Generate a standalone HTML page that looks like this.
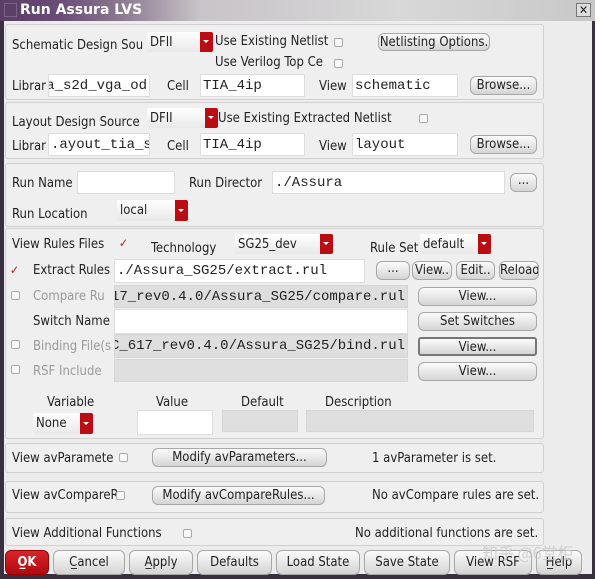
<!DOCTYPE html>
<html><head><meta charset="utf-8"><style>
*{box-sizing:border-box;margin:0;padding:0}
body{width:600px;height:579px;overflow:hidden;background:#fff;font-family:"DejaVu Sans Condensed","Liberation Sans",sans-serif;font-size:13px;color:#222;position:relative}
.a{position:absolute;white-space:nowrap}
#win{position:absolute;left:0;top:0;width:595px;height:579px;background:#3a2f40}
#inner{position:absolute;left:4px;top:21px;width:588px;height:553px;background:#ececec}
#title{position:absolute;left:0;top:0;width:595px;height:21px;background:linear-gradient(90deg,#5a3e66 0,#6a4c78 60px,#8a7890 120px,#c8c4c8 200px,#d8d8d8 400px,#c8c8c8 100%)}
.pn{position:absolute;left:5px;width:539px;border:1px solid #d0d0d0;border-radius:3px;background:#efefef}
.inp{position:absolute;background:#fff;border:1px solid #ddd;font-family:"Liberation Mono",monospace;font-size:14px;line-height:20px;padding-left:2px;overflow:hidden;white-space:nowrap}
.r{display:flex;justify-content:flex-end;padding-right:2px}
.gr{background:#dedede;border-color:#d6d6d6}
.btn{position:absolute;border:1px solid #a8a8a8;border-radius:6px;background:linear-gradient(#fbfbfb,#e4e4e4 60%,#d4d4d4);text-align:center;font-size:13px;line-height:17px;white-space:nowrap;overflow:hidden}
.cb{position:absolute;background:linear-gradient(#fff,#e8e8e8);border-radius:2px;display:flex;align-items:center;font-size:13px;line-height:19px;padding-left:3px;overflow:hidden;white-space:nowrap;justify-content:flex-start}
.cb:after{content:"";position:absolute;right:0;top:0;bottom:0;width:13px;background:#b80d12}
.cb i{position:absolute;right:4px;top:50%;margin-top:-2px;width:0;height:0;border-left:3px solid transparent;border-right:3px solid transparent;border-top:3px solid #fff;z-index:2}
.ck{position:absolute;width:9px;height:9px;border:1px solid #aaa;background:#f8f8f8;border-radius:2px}
.ckd{position:absolute;color:#c0141a;font-size:12px;font-weight:bold;line-height:10px}
.dis{color:#9a9a9a}
</style></head><body>
<div id="win"></div>
<div id="title"></div>
<div class="a" style="left:4px;top:3px;width:13px;height:14px;background:#5b3f67;border:1px solid #7a6286"></div>
<div class="a" style="left:20px;top:2px;color:#fff;font-weight:bold;font-size:14px;font-family:'DejaVu Sans','Liberation Sans',sans-serif">Run Assura LVS</div>
<div class="a" style="left:576px;top:3px;width:15px;height:14px;background:#ddd;border:1px solid #777;font-weight:bold;font-size:12px;line-height:12px;text-align:center">✕</div>
<div id="inner"></div>

<div class="pn" style="top:24px;height:76px"></div>
<div class="a" style="left:12px;top:38px">Schematic Design Sou</div>
<div class="cb" style="left:147px;top:32px;width:66px;height:20px">DFII<i></i></div>
<div class="a" style="left:215px;top:34px">Use Existing Netlist</div>
<div class="ck" style="left:334px;top:38px"></div>
<div class="btn" style="left:378px;top:33px;width:112px;height:18px">Netlisting Options.</div>
<div class="a" style="left:215px;top:55px">Use Verilog Top Ce</div>
<div class="ck" style="left:334px;top:59px"></div>
<div class="a" style="left:12px;top:79px">Librar</div>
<div class="inp r" style="left:48px;top:74px;width:102px;height:23px;line-height:23px">ka_s2d_vga_od</div>
<div class="a" style="left:167px;top:79px">Cell</div>
<div class="inp" style="left:200px;top:74px;width:105px;height:23px;line-height:23px">TIA_4ip</div>
<div class="a" style="left:319px;top:79px">View</div>
<div class="inp" style="left:352px;top:74px;width:106px;height:23px;line-height:23px">schematic</div>
<div class="btn" style="left:470px;top:76px;width:67px;height:19px">Browse...</div>

<div class="pn" style="top:102px;height:57px"></div>
<div class="a" style="left:12px;top:115px">Layout Design Source</div>
<div class="cb" style="left:147px;top:108px;width:71px;height:20px">DFII<i></i></div>
<div class="a" style="left:218px;top:111px">Use Existing Extracted Netlist</div>
<div class="ck" style="left:419px;top:114px"></div>
<div class="a" style="left:12px;top:139px">Librar</div>
<div class="inp" style="left:48px;top:133px;width:102px;height:23px;line-height:23px">.ayout_tia_s</div>
<div class="a" style="left:167px;top:139px">Cell</div>
<div class="inp" style="left:200px;top:133px;width:105px;height:23px;line-height:23px">TIA_4ip</div>
<div class="a" style="left:319px;top:139px">View</div>
<div class="inp" style="left:352px;top:133px;width:106px;height:23px;line-height:23px">layout</div>
<div class="btn" style="left:470px;top:135px;width:67px;height:19px">Browse...</div>

<div class="pn" style="top:163px;height:64px"></div>
<div class="a" style="left:12px;top:176px">Run Name</div>
<div class="inp" style="left:77px;top:171px;width:98px;height:23px"></div>
<div class="a" style="left:189px;top:176px">Run Director</div>
<div class="inp" style="left:272px;top:171px;width:233px;height:23px;line-height:23px">./Assura</div>
<div class="btn" style="left:510px;top:173px;width:27px;height:19px;line-height:14px">...</div>
<div class="a" style="left:12px;top:207px">Run Location</div>
<div class="cb" style="left:117px;top:200px;width:71px;height:21px">local<i></i></div>

<div class="pn" style="top:228px;height:211px"></div>
<div class="a" style="left:12px;top:237px">View Rules Files</div>
<div class="ckd" style="left:119px;top:238px">✓</div>
<div class="a" style="left:151px;top:241px">Technology</div>
<div class="cb" style="left:235px;top:234px;width:98px;height:20px">SG25_dev<i></i></div>
<div class="a" style="left:370px;top:241px">Rule Set</div>
<div class="cb" style="left:420px;top:234px;width:71px;height:20px">default<i></i></div>
<div class="ckd" style="left:10px;top:265px">✓</div>
<div class="a" style="left:33px;top:263px">Extract Rules</div>
<div class="inp" style="left:114px;top:259px;width:251px;height:24px;line-height:22px">./Assura_SG25/extract.rul</div>
<div class="btn" style="left:376px;top:261px;width:34px;height:19px;line-height:14px">...</div>
<div class="btn" style="left:412px;top:261px;width:40px;height:19px">View..</div>
<div class="btn" style="left:456px;top:261px;width:39px;height:19px">Edit..</div>
<div class="btn" style="left:499px;top:261px;width:40px;height:19px">Reload</div>
<div class="ck" style="left:11px;top:291px"></div>
<div class="a dis" style="left:33px;top:289px">Compare Ru</div>
<div class="inp gr r" style="left:114px;top:285px;width:294px;height:23px;line-height:22px">617_rev0.4.0/Assura_SG25/compare.rul</div>
<div class="btn" style="left:418px;top:287px;width:119px;height:19px">View...</div>
<div class="a" style="left:33px;top:314px">Switch Name</div>
<div class="inp" style="left:114px;top:309px;width:294px;height:25px"></div>
<div class="btn" style="left:418px;top:312px;width:119px;height:19px">Set Switches</div>
<div class="ck" style="left:11px;top:340px"></div>
<div class="a dis" style="left:33px;top:339px">Binding File(s</div>
<div class="inp gr r" style="left:114px;top:334px;width:294px;height:24px;line-height:23px">IC_617_rev0.4.0/Assura_SG25/bind.rul</div>
<div class="btn" style="left:418px;top:337px;width:119px;height:19px;border:2px solid #777;border-radius:3px">View...</div>
<div class="ck" style="left:11px;top:365px"></div>
<div class="a dis" style="left:33px;top:364px">RSF Include</div>
<div class="inp gr" style="left:114px;top:359px;width:294px;height:23px"></div>
<div class="btn" style="left:418px;top:362px;width:119px;height:19px">View...</div>
<div class="a" style="left:47px;top:395px">Variable</div>
<div class="a" style="left:156px;top:395px">Value</div>
<div class="a" style="left:241px;top:395px">Default</div>
<div class="a" style="left:325px;top:395px">Description</div>
<div class="cb" style="left:33px;top:413px;width:60px;height:21px">None<i></i></div>
<div class="inp" style="left:137px;top:410px;width:76px;height:25px"></div>
<div class="inp gr" style="left:222px;top:410px;width:76px;height:22px"></div>
<div class="inp gr" style="left:306px;top:410px;width:228px;height:22px"></div>

<div class="pn" style="top:443px;height:30px"></div>
<div class="a" style="left:12px;top:451px">View avParamete</div>
<div class="ck" style="left:119px;top:453px"></div>
<div class="btn" style="left:152px;top:448px;width:175px;height:19px">Modify avParameters...</div>
<div class="a" style="left:372px;top:451px">1 avParameter is set.</div>

<div class="pn" style="top:481px;height:32px"></div>
<div class="a" style="left:12px;top:488px">View avCompareR</div>
<div class="ck" style="left:116px;top:491px"></div>
<div class="btn" style="left:152px;top:486px;width:173px;height:19px">Modify avCompareRules...</div>
<div class="a" style="left:372px;top:488px">No avCompare rules are set.</div>

<div class="pn" style="top:518px;height:28px"></div>
<div class="a" style="left:12px;top:526px">View Additional Functions</div>
<div class="ck" style="left:183px;top:529px"></div>
<div class="a" style="left:355px;top:526px">No additional functions are set.</div>

<div class="btn" style="left:5px;top:550px;width:44px;height:25px;line-height:23px;background:linear-gradient(#d8242a,#b00a10);color:#fff;font-weight:bold;border-color:#900">O̲K</div>
<div class="btn" style="left:53px;top:550px;width:72px;height:25px;line-height:23px">C̲ancel</div>
<div class="btn" style="left:129px;top:550px;width:64px;height:25px;line-height:23px">A̲pply</div>
<div class="btn" style="left:197px;top:550px;width:75px;height:25px;line-height:23px">Defaults</div>
<div class="btn" style="left:276px;top:550px;width:84px;height:25px;line-height:23px">Load State</div>
<div class="btn" style="left:364px;top:550px;width:86px;height:25px;line-height:23px">Save State</div>
<div class="btn" style="left:454px;top:550px;width:78px;height:25px;line-height:23px">View RSF</div>
<div class="btn" style="left:536px;top:550px;width:46px;height:25px;line-height:23px">H̲elp</div>
<div class="a" style="left:482px;top:540px;color:rgba(200,200,200,0.8);font-size:16px;font-family:'Noto Sans CJK SC',sans-serif">知乎 @6堂柜</div>
</body></html>
